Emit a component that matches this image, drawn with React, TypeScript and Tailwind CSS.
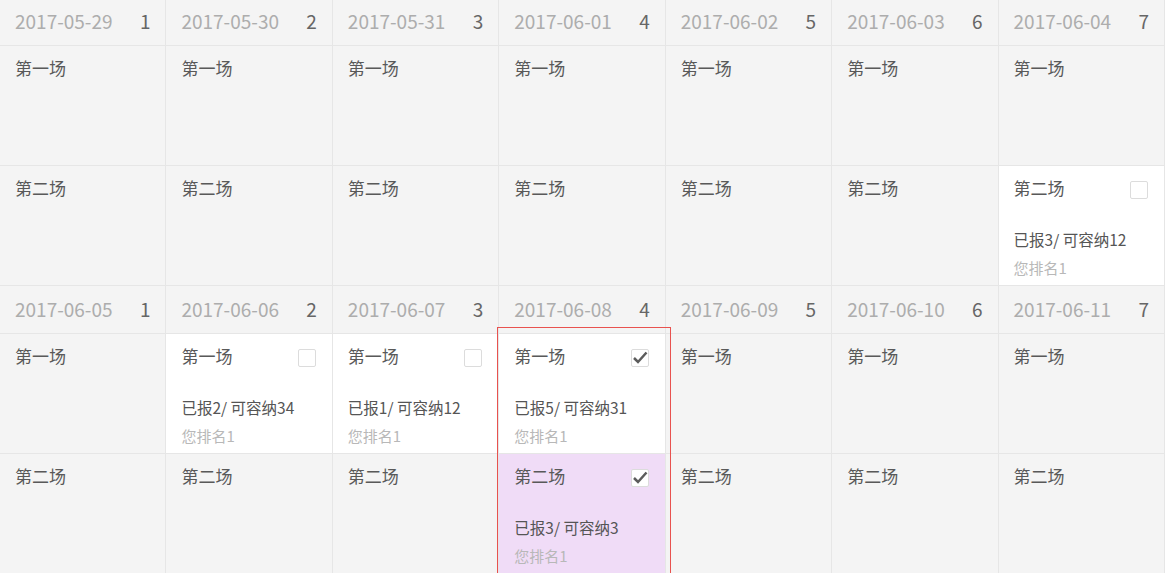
import React from 'react';

type Slot = {
  active?: boolean;
  checked?: boolean;
  selected?: boolean;
  info?: string;
  rank?: string;
};

type Day = { date: string; s1?: Slot; s2?: Slot };

const WEEKS: Day[][] = [
  [
    { date: '2017-05-29' },
    { date: '2017-05-30' },
    { date: '2017-05-31' },
    { date: '2017-06-01' },
    { date: '2017-06-02' },
    { date: '2017-06-03' },
    { date: '2017-06-04', s2: { active: true, info: '已报3/ 可容纳12', rank: '您排名1' } },
  ],
  [
    { date: '2017-06-05' },
    { date: '2017-06-06', s1: { active: true, info: '已报2/ 可容纳34', rank: '您排名1' } },
    { date: '2017-06-07', s1: { active: true, info: '已报1/ 可容纳12', rank: '您排名1' } },
    {
      date: '2017-06-08',
      s1: { active: true, checked: true, info: '已报5/ 可容纳31', rank: '您排名1' },
      s2: { active: true, checked: true, selected: true, info: '已报3/ 可容纳3', rank: '您排名1' },
    },
    { date: '2017-06-09' },
    { date: '2017-06-10' },
    { date: '2017-06-11' },
  ],
];

function Checkbox({ checked }: { checked?: boolean }) {
  return (
    <div className="mt-[5px] w-[18px] h-[18px] shrink-0 rounded-[2px] border border-[#dcdcdc] bg-white flex items-center justify-center">
      {checked && (
        <svg className="block shrink-0 w-[16px] h-[16px]" viewBox="0 0 16 16">
          <path d="M2 8 L6 12 L14.5 2.5" fill="none" stroke="#5c5c5c" strokeWidth="2.5" />
        </svg>
      )}
    </div>
  );
}

function SessionCell({ title, slot }: { title: string; slot?: Slot }) {
  const bg = slot?.selected ? 'bg-[#f0dcf7]' : slot?.active ? 'bg-white' : 'bg-[#f4f4f4]';
  return (
    <div className={`h-[120px] border-r border-b border-[#e6e6e6] pl-[15px] pr-[16px] pt-[10px] ${bg}`}>
      <div className="flex justify-between items-start">
        <span className="text-[17px] leading-[24px] text-[#595959]">{title}</span>
        {slot?.active && <Checkbox checked={slot.checked} />}
      </div>
      {slot?.info && (
        <div className="mt-[28px] text-[15.5px] leading-[22px] text-[#555]">{slot.info}</div>
      )}
      {slot?.rank && (
        <div className="mt-[8px] text-[15px] leading-[20px] text-[#b8b8b8]">{slot.rank}</div>
      )}
    </div>
  );
}

function Week({ days, highlight }: { days: Day[]; highlight?: number }) {
  return (
    <div className="relative grid grid-cols-7">
      {days.map((d, i) => (
        <div
          key={d.date}
          className="h-[48px] border-r border-b border-[#e6e6e6] bg-[#f4f4f4] px-[15px] flex items-center justify-between"
        >
          <span className="text-[19px] text-[#adadad]">{d.date}</span>
          <span className="text-[19px] text-[#666]">{i + 1}</span>
        </div>
      ))}
      {days.map((d) => (
        <SessionCell key={d.date + '1'} title="第一场" slot={d.s1} />
      ))}
      {days.map((d) => (
        <SessionCell key={d.date + '2'} title="第二场" slot={d.s2} />
      ))}
      {highlight !== undefined && (
        <div className="absolute top-[41px] left-[calc(300%/7-2px)] w-[174px] h-[260px] border border-[#e8524f] pointer-events-none" />
      )}
    </div>
  );
}

export default function App() {
  return (
    <div
      className="w-[1165px] h-[573px] overflow-hidden bg-white"
      style={{ fontFamily: '"Noto Sans CJK SC", "Noto Sans", sans-serif' }}
    >
      <div className="-mt-[2px]">
        <Week days={WEEKS[0]} />
        <Week days={WEEKS[1]} highlight={3} />
      </div>
    </div>
  );
}
